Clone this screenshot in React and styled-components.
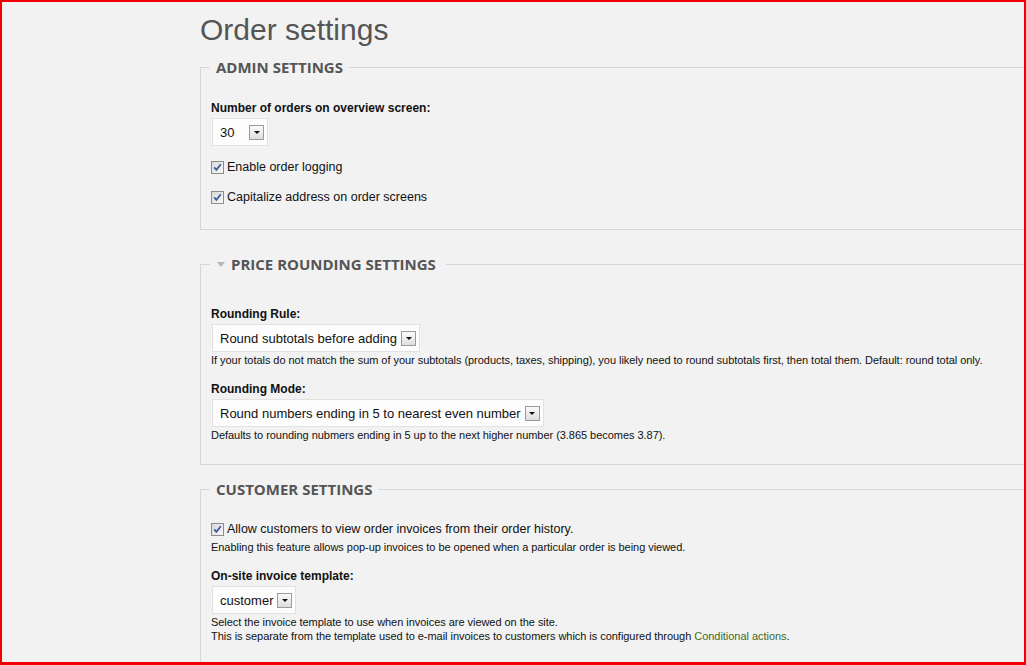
import React from "react";
import styled, { createGlobalStyle } from "styled-components";

const GlobalStyle = createGlobalStyle`
  html, body {
    margin: 0;
    padding: 0;
    background: #f2f2f2;
  }
  body {
    font-family: "Liberation Sans", Arial, sans-serif;
    color: #111;
  }
`;

const Frame = styled.div`
  box-sizing: border-box;
  width: 1026px;
  height: 665px;
  border: 2px solid #f00000;
  border-bottom-width: 3px;
  overflow: hidden;
  background: #f2f2f2;
`;

const Main = styled.main`
  padding-left: 198px;
`;

const Title = styled.h1`
  margin: 10px 0 9px;
  font-size: 30px;
  line-height: 36px;
  font-weight: normal;
  color: #555;
`;

const Fieldset = styled.fieldset`
  margin: ${(p) => p.$top || 0}px 0 0;
  padding: ${(p) => p.$padTop}px 0 ${(p) => p.$padBottom}px 10px;
  border: 1px solid #d6d6d6;
  border-right: none;
  min-width: 0;
`;

const Legend = styled.legend`
  margin-left: -1px;
  padding: 0 ${(p) => (p.$collapsible ? 10 : 6)}px 0 6px;
  font-family: "Open Sans", "Liberation Sans", sans-serif;
  font-weight: 700;
  font-size: 15px;
  line-height: 20px;
  color: #555;
  text-transform: uppercase;
  display: flex;
  align-items: center;
`;

const Caret = styled.span`
  width: 0;
  height: 0;
  border-left: 4px solid transparent;
  border-right: 4px solid transparent;
  border-top: 5px solid #b8b8b8;
  margin: 1px 6px 0 1px;
`;

const FormItem = styled.div`
  margin-bottom: ${(p) => p.$after ?? 14}px;
`;

const Label = styled.label`
  display: block;
  font-weight: bold;
  font-size: 12px;
  line-height: 16px;
  margin-bottom: 2px;
  color: #111;
`;

const SelectBox = styled.div`
  display: inline-flex;
  align-items: center;
  box-sizing: border-box;
  height: 28px;
  margin-left: 1px;
  padding: 0 3px 0 7px;
  background: #fdfdfd;
  border: 1px solid #e2e2e2;
  font-size: 13px;
  color: #111;
`;

const SelectValue = styled.span`
  min-width: ${(p) => p.$minWidth || 0}px;
  margin-right: 4px;
  white-space: nowrap;
`;

const SelectArrow = styled.span`
  box-sizing: border-box;
  width: 15px;
  height: 15px;
  border: 1px solid #9a9a9a;
  background: linear-gradient(#fafafa, #dedede);
  display: flex;
  align-items: center;
  justify-content: center;
  &::after {
    content: "";
    border-left: 3px solid transparent;
    border-right: 3px solid transparent;
    border-top: 3px solid #111;
  }
`;

const CheckRow = styled.div`
  display: flex;
  align-items: center;
  gap: 3px;
  font-size: 12.5px;
  line-height: 18px;
  margin-bottom: ${(p) => p.$after ?? 12}px;
`;

const Description = styled.div`
  font-size: 11px;
  line-height: 14px;
  letter-spacing: -0.04px;
  margin-top: ${(p) => p.$top ?? 1}px;
  color: #111;
`;

const Link = styled.a`
  color: #3f6b1f;
  text-decoration: none;
`;

const CheckBox = () => (
  <svg width="13" height="13" viewBox="0 0 13 13">
    <defs>
      <linearGradient id="cbg" x1="0" y1="0" x2="1" y2="1">
        <stop offset="0" stopColor="#d6d6d6" />
        <stop offset="1" stopColor="#fafafa" />
      </linearGradient>
    </defs>
    <rect x="0.5" y="0.5" width="12" height="12" fill="url(#cbg)" stroke="#8c8c8c" />
    <path d="M3.2 6.4 L5.4 8.8 L9.8 3.2" fill="none" stroke="#3d5a9a" strokeWidth="1.8" />
  </svg>
);

const Select = ({ value, minWidth }) => (
  <SelectBox>
    <SelectValue $minWidth={minWidth}>{value}</SelectValue>
    <SelectArrow />
  </SelectBox>
);

const App = () => (
  <Frame>
    <GlobalStyle />
    <Main>
      <Title>Order settings</Title>

      <Fieldset $padTop={23} $padBottom={23}>
        <Legend>Admin settings</Legend>
        <FormItem $after={12}>
          <Label>Number of orders on overview screen:</Label>
          <Select value="30" minWidth={25} />
        </FormItem>
        <CheckRow>
          <CheckBox />
          Enable order logging
        </CheckRow>
        <CheckRow $after={0}>
          <CheckBox />
          Capitalize address on order screens
        </CheckRow>
      </Fieldset>

      <Fieldset $top={24} $padTop={32} $padBottom={22}>
        <Legend $collapsible>
          <Caret />
          Price rounding settings
        </Legend>
        <FormItem>
          <Label>Rounding Rule:</Label>
          <Select value="Round subtotals before adding" />
          <Description>
            If your totals do not match the sum of your subtotals (products, taxes, shipping), you likely need to round subtotals first, then total them. Default: round total only.
          </Description>
        </FormItem>
        <FormItem $after={0}>
          <Label>Rounding Mode:</Label>
          <Select value="Round numbers ending in 5 to nearest even number" />
          <Description>
            Defaults to rounding nubmers ending in 5 up to the next higher number (3.865 becomes 3.87).
          </Description>
        </FormItem>
      </Fieldset>

      <Fieldset $top={14} $padTop={21} $padBottom={22}>
        <Legend>Customer settings</Legend>
        <FormItem>
          <CheckRow $after={0}>
            <CheckBox />
            Allow customers to view order invoices from their order history.
          </CheckRow>
          <Description $top={2}>
            Enabling this feature allows pop-up invoices to be opened when a particular order is being viewed.
          </Description>
        </FormItem>
        <FormItem>
          <Label>On-site invoice template:</Label>
          <Select value="customer" />
          <Description>
            Select the invoice template to use when invoices are viewed on the site.
            <br />
            This is separate from the template used to e-mail invoices to customers which is configured through{" "}
            <Link href="#">Conditional actions</Link>.
          </Description>
        </FormItem>
      </Fieldset>
    </Main>
  </Frame>
);

export default App;
